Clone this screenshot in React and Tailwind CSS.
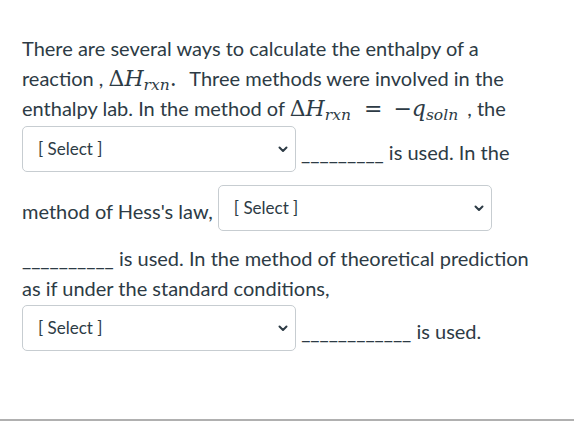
import React from "react";

const Chevron = () => (
  <svg
    width="12"
    height="12"
    viewBox="0 0 24 24"
    fill="none"
    stroke="#2d3b45"
    strokeWidth="4"
    strokeLinecap="round"
    strokeLinejoin="round"
  >
    <path d="M5 9l7 7 7-7" />
  </svg>
);

const QuizSelect = ({ className = "" }) => (
  <span className={`relative inline-block align-[5px] ${className}`}>
    <select
      defaultValue=""
      className="appearance-none w-[274px] h-[46px] pl-[15px] pr-8 border border-[#c7cdd1] rounded-[5px] bg-white text-[17px] text-[#2d3b45] outline-none"
      style={{ fontFamily: "Lato, sans-serif" }}
    >
      <option value="">[ Select ]</option>
      <option value="a">calorimetry</option>
      <option value="b">Hess's law</option>
      <option value="c">standard enthalpies of formation</option>
    </select>
    <span className="pointer-events-none absolute right-[7px] top-1/2 -translate-y-1/2 flex">
      <Chevron />
    </span>
  </span>
);

const Math = ({ children, className = "" }) => (
  <span
    className={`font-['DejaVu_Serif',serif] text-[22px] leading-none ${className}`}
  >
    {children}
  </span>
);

const Sub = ({ children }) => (
  <span className="relative top-[4px] text-[15.5px] italic">{children}</span>
);

const DeltaH = () => (
  <>
    Δ<i>H</i>
    <Sub>rxn</Sub>
  </>
);

export default function App() {
  return (
    <div className="bg-white w-[574px] h-[426px] flex flex-col">
      <div
        className="flex-1 pl-[22px] pr-[40px] pt-[33px] text-[20px] leading-[30px] text-[#2d3b45]"
        style={{ fontFamily: "Lato, sans-serif" }}
      >
        <p>
          There are several ways to calculate the enthalpy of a reaction ,{" "}
          <Math className="mr-[8px]">
            <DeltaH />.
          </Math>{" "}
          Three methods were involved in the enthalpy lab. In the method of{" "}
          <Math className="mr-[4px]">
            <DeltaH />
            <span className="ml-[13px] mr-[11px]">=</span>−<i>q</i>
            <Sub>soln</Sub>
          </Math>{" "}
          , the <QuizSelect className="mt-[3px]" /> _________ is used. In the
          method of Hess's law, <QuizSelect className="mt-[13px] mb-[12px]" />{" "}
          __________ is used. In the method of theoretical prediction as if
          under the standard conditions, <QuizSelect className="mt-[2px]" />{" "}
          ____________ is used.
        </p>
      </div>
      <div className="h-[2px] bg-[#b0b0b0] mb-[5px]" />
    </div>
  );
}
